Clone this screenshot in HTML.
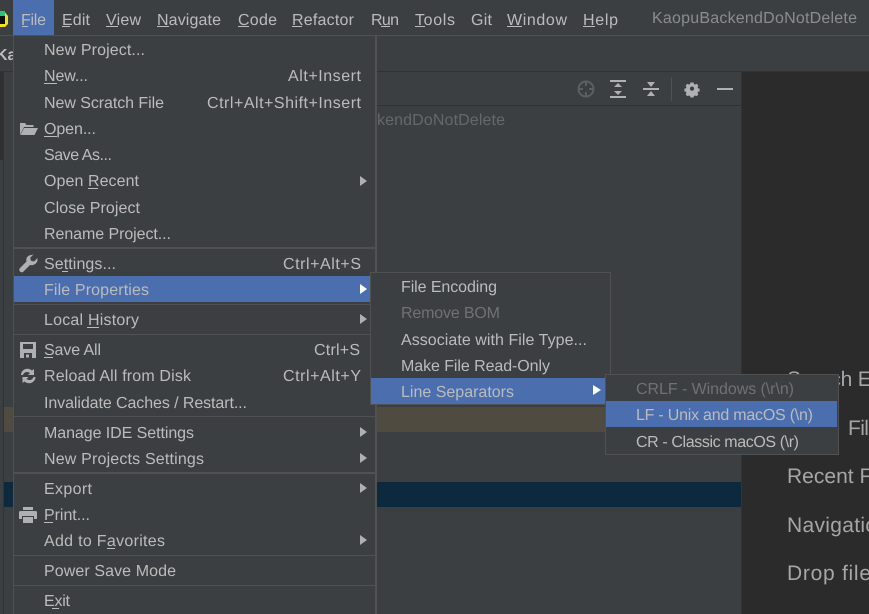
<!DOCTYPE html>
<html>
<head>
<meta charset="utf-8">
<style>
html,body{margin:0;padding:0;width:869px;height:614px;overflow:hidden;background:#3c3f41}
svg{display:block}
text{font-family:"Liberation Sans",sans-serif;font-size:16px;fill:#bbbbbb;text-rendering:geometricPrecision}
.bar text{fill:#bbbbbb}
.d{fill:#6f7173}
.big{font-size:21px;fill:#a6a6a6}
</style>
</head>
<body>
<svg width="869" height="614" viewBox="0 0 869 614" xmlns="http://www.w3.org/2000/svg">
<!-- background -->
<rect width="869" height="614" fill="#3c3f41"/>
<rect x="0" y="35" width="869" height="1" fill="#515151"/>
<rect x="0" y="71" width="869" height="1" fill="#323232"/>
<rect x="0" y="72" width="3" height="88" fill="#2f2f2f"/>
<rect x="3" y="72" width="1" height="542" fill="#323232"/>
<rect x="377" y="105" width="365" height="1" fill="#323232"/>
<rect x="742" y="72" width="127" height="542" fill="#2b2b2b"/>
<rect x="741" y="72" width="1" height="542" fill="#333333"/>
<rect x="4" y="407" width="738" height="25" fill="#4f4b41"/>
<rect x="4" y="482" width="737" height="25" fill="#0d293e"/>
<text x="377" y="125" style="fill:#65686a" textLength="128" lengthAdjust="spacing">kendDoNotDelete</text>

<!-- right placeholder text -->
<text class="big" x="787" y="386" textLength="95" lengthAdjust="spacing">Search Ev</text>
<text class="big" x="848" y="435" textLength="32" lengthAdjust="spacing">File</text>
<text class="big" x="787" y="483" textLength="90" lengthAdjust="spacing">Recent Fi</text>
<text class="big" x="787" y="532" textLength="90" lengthAdjust="spacing">Navigatio</text>
<text class="big" x="787" y="580" textLength="84" lengthAdjust="spacing">Drop file</text>

<!-- toolbar icons -->
<g fill="none" stroke="#5c5f61" stroke-width="2">
<circle cx="586" cy="89" r="7.500"/>
<path d="M586 81v5M586 92v5M578 89h5M589 89h5"/>
</g>
<g fill="#aeb0b2">
<rect x="610" y="80" width="16" height="2"/>
<rect x="610" y="96" width="16" height="2"/>
<path d="M618 83l4 4h-8zM618 95l-4-4h8z"/>
<rect x="643" y="88" width="16" height="2"/>
<path d="M651 87l-4-5h8zM651 91l4 5h-8z"/>
<rect x="717" y="88" width="16" height="2"/>
<path fill-rule="evenodd" transform="translate(692 89) scale(.76) translate(-692 -89.500)" d="M690 81h4l.5 2 1.600.7 1.900-1.100 2.400 2.600-1.100 1.800.6 1.600 2.100.4v3.600l-2.100.5-.6 1.600 1.100 1.800-2.400 2.600-1.900-1.100-1.600.7-.5 2h-4l-.5-2-1.600-.7-1.900 1.100-2.400-2.600 1.100-1.800-.6-1.600-2.100-.5v-3.600l2.100-.4.6-1.600-1.100-1.800 2.400-2.600 1.900 1.100 1.600-.7zM692 86.200a2.800 2.800 0 1 0 0 5.600 2.800 2.800 0 0 0 0-5.600z"/>
</g>
<rect x="671" y="77" width="1" height="24" fill="#515151"/>

<!-- logo and tab -->
<path d="M0 11h4l4 5v8l-3 3H0z" fill="#f2e21e"/>
<path d="M0 11h5v5H0z" fill="#2fc27a"/>
<rect x="0" y="16" width="5" height="8" fill="#111"/>
<text x="-4" y="60" style="font-weight:bold">Ka</text>

<!-- menu bar -->
<rect x="13" y="0" width="41" height="35" fill="#4b6eaf"/>
<g class="bar">
<text x="21" y="25" textLength="25" lengthAdjust="spacing">File</text>
<text x="62" y="25" textLength="28" lengthAdjust="spacing">Edit</text>
<text x="106" y="25" textLength="35" lengthAdjust="spacing">View</text>
<text x="157" y="25" textLength="64" lengthAdjust="spacing">Navigate</text>
<text x="238" y="25" textLength="39" lengthAdjust="spacing">Code</text>
<text x="292" y="25" textLength="62" lengthAdjust="spacing">Refactor</text>
<text x="371" y="25" textLength="28" lengthAdjust="spacing">Run</text>
<text x="415" y="25" textLength="40" lengthAdjust="spacing">Tools</text>
<text x="471" y="25" textLength="21" lengthAdjust="spacing">Git</text>
<text x="507" y="25" textLength="60" lengthAdjust="spacing">Window</text>
<text x="583" y="25" textLength="35" lengthAdjust="spacing">Help</text>
</g>
<text x="652" y="23" style="fill:#8a8c8e" textLength="205" lengthAdjust="spacing">KaopuBackendDoNotDelete</text>
<g fill="#bbbbbb">
<rect x="22" y="26" width="6" height="1"/><rect x="62" y="26" width="8" height="1"/><rect x="106" y="26" width="12" height="1"/><rect x="157" y="26" width="12" height="1"/><rect x="238" y="26" width="11" height="1"/><rect x="292" y="26" width="10" height="1"/><rect x="381" y="26" width="9" height="1"/><rect x="415" y="26" width="10" height="1"/><rect x="507" y="26" width="15" height="1"/><rect x="583" y="26" width="12" height="1"/>
</g>

<!-- File menu -->
<rect x="13" y="36" width="1" height="578" fill="#515151"/>
<rect x="14" y="36" width="361" height="578" fill="#3c3f41"/>
<rect x="375" y="36" width="2" height="578" fill="#515151"/>
<rect x="14" y="247" width="361" height="2" fill="#515151"/>
<rect x="14" y="276" width="356" height="26" fill="#4b6eaf"/>
<rect x="14" y="304" width="361" height="1" fill="#515151"/>
<rect x="14" y="334" width="361" height="1" fill="#515151"/>
<rect x="14" y="416" width="361" height="1" fill="#515151"/>
<rect x="14" y="472" width="361" height="2" fill="#515151"/>
<rect x="14" y="555" width="361" height="1" fill="#515151"/>
<rect x="14" y="585" width="361" height="1" fill="#515151"/>

<text x="44" y="55" textLength="101" lengthAdjust="spacing">New Project...</text>
<text x="44" y="81" textLength="44" lengthAdjust="spacing">New...</text>
<text x="44" y="108" textLength="120" lengthAdjust="spacing">New Scratch File</text>
<text x="44" y="134" textLength="52" lengthAdjust="spacing">Open...</text>
<text x="44" y="160" textLength="68" lengthAdjust="spacing">Save As...</text>
<text x="44" y="186" textLength="95" lengthAdjust="spacing">Open Recent</text>
<text x="44" y="213" textLength="96" lengthAdjust="spacing">Close Project</text>
<text x="44" y="239" textLength="127" lengthAdjust="spacing">Rename Project...</text>
<text x="44" y="269" textLength="72" lengthAdjust="spacing">Settings...</text>
<text x="44" y="295" textLength="105" lengthAdjust="spacing">File Properties</text>
<text x="44" y="325" textLength="95" lengthAdjust="spacing">Local History</text>
<text x="44" y="355" textLength="57" lengthAdjust="spacing">Save All</text>
<text x="44" y="381" textLength="147" lengthAdjust="spacing">Reload All from Disk</text>
<text x="44" y="408" textLength="203" lengthAdjust="spacing">Invalidate Caches / Restart...</text>
<text x="44" y="438" textLength="150" lengthAdjust="spacing">Manage IDE Settings</text>
<text x="44" y="464" textLength="160" lengthAdjust="spacing">New Projects Settings</text>
<text x="44" y="494" textLength="48" lengthAdjust="spacing">Export</text>
<text x="44" y="520" textLength="46" lengthAdjust="spacing">Print...</text>
<text x="44" y="546" textLength="121" lengthAdjust="spacing">Add to Favorites</text>
<text x="44" y="576" textLength="132" lengthAdjust="spacing">Power Save Mode</text>
<text x="44" y="606" textLength="26" lengthAdjust="spacing">Exit</text>

<text x="288" y="81" textLength="73" lengthAdjust="spacing">Alt+Insert</text>
<text x="207" y="108" textLength="154" lengthAdjust="spacing">Ctrl+Alt+Shift+Insert</text>
<text x="283" y="269" textLength="78" lengthAdjust="spacing">Ctrl+Alt+S</text>
<text x="314" y="355" textLength="46" lengthAdjust="spacing">Ctrl+S</text>
<text x="283" y="381" textLength="78" lengthAdjust="spacing">Ctrl+Alt+Y</text>

<g fill="#bbbbbb">
<rect x="44" y="83" width="13" height="1"/>
<rect x="44" y="136" width="13" height="1"/>
<rect x="88" y="188" width="10" height="1"/>
<rect x="62" y="271" width="6" height="1"/>
<rect x="87" y="327" width="12" height="1"/>
<rect x="44" y="357" width="9" height="1"/>
<rect x="44" y="522" width="9" height="1"/>
<rect x="107" y="548" width="8" height="1"/>
<rect x="52" y="608" width="7" height="1"/>
</g>

<!-- arrows -->
<g fill="#aeb0b2">
<path d="M360 176l7 5-7 5z"/>
<path d="M360 314l7 5-7 5z"/>
<path d="M360 427l7 5-7 5z"/>
<path d="M360 453l7 5-7 5z"/>
<path d="M360 483l7 5-7 5z"/>
<path d="M360 535l7 5-7 5z"/>
</g>
<path d="M360 284l7 5-7 5z" fill="#ffffff"/>

<!-- menu icons -->
<g fill="#aeb0b2">
<!-- folder -->
<path d="M20 135v-12h5l1.500 2h7v2h-9.500z"/>
<path d="M20.500 135l3.500-7h14l-3.500 7z"/>
<!-- wrench -->
<path d="M31.500 255c-3.500 0-6 3-5 6.500L20 268c-1 1-1 2.500 0 3.500s2.500 1 3.500 0l6.500-6.500c3.500 1 7.500-1.500 7.500-5.500v-1.500l-3.500 3.500-3-.8-.8-3 3.500-3.500z"/>
<!-- save -->
<path fill-rule="evenodd" d="M20 342h16v16h-16zM23 344v5h10v-5zM24 353v5h8v-5zM26 354.500h3v3h-3z"/>
<!-- reload -->
<path d="M21 375c0-5 6-8.500 11-4.500l2-1.500v6h-6l2-2c-3-2-6-1-7 2zM35.500 377c0 5-6 8.500-11 4.500l-2 1.500v-6h6l-2 2c3 2 6 1 7-2z"/>
<!-- printer -->
<rect x="23" y="507" width="10" height="3"/>
<path fill-rule="evenodd" d="M20.500 511h15a1.500 1.500 0 0 1 1.500 1.500v6.500h-3v-3h-12v3h-3v-6.500a1.500 1.500 0 0 1 1.500-1.500z"/>
<rect x="23" y="517" width="10" height="6"/>
</g>

<!-- submenu 1 -->
<rect x="370.500" y="272.500" width="240" height="132" fill="#3c3f41" stroke="#515151"/>
<rect x="371" y="378" width="234" height="26" fill="#4b6eaf"/>
<text x="401" y="292" textLength="96" lengthAdjust="spacing">File Encoding</text>
<text class="d" x="401" y="318" textLength="99" lengthAdjust="spacing">Remove BOM</text>
<text x="401" y="345" textLength="186" lengthAdjust="spacing">Associate with File Type...</text>
<text x="401" y="371" textLength="149" lengthAdjust="spacing">Make File Read-Only</text>
<text x="401" y="397" textLength="113" lengthAdjust="spacing">Line Separators</text>
<path d="M593 385l8 5-8 5z" fill="#ffffff"/>

<!-- submenu 2 -->
<rect x="605.500" y="374.500" width="233" height="80" fill="#3c3f41" stroke="#515151"/>
<rect x="606" y="401" width="231" height="26" fill="#4b6eaf"/>
<text class="d" x="636" y="394" textLength="158" lengthAdjust="spacing">CRLF - Windows (\r\n)</text>
<text x="636" y="420" textLength="177" lengthAdjust="spacing">LF - Unix and macOS (\n)</text>
<text x="636" y="447" textLength="163" lengthAdjust="spacing">CR - Classic macOS (\r)</text>
</svg>
</body>
</html>
